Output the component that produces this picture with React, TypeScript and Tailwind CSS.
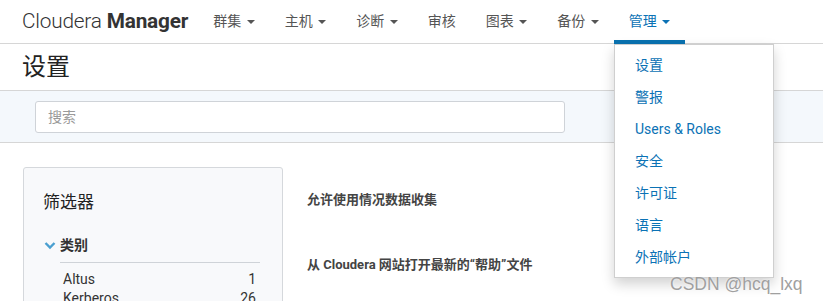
import { useState } from "react";

const font = "font-['Roboto','Noto_Sans_CJK_SC',sans-serif]";

const navItems: { label: string; caret: boolean }[] = [
  { label: "群集", caret: true },
  { label: "主机", caret: true },
  { label: "诊断", caret: true },
  { label: "审核", caret: false },
  { label: "图表", caret: true },
  { label: "备份", caret: true },
];

const menuItems = ["设置", "警报", "Users & Roles", "安全", "许可证", "语言", "外部帐户"];

function Caret({ className = "" }: { className?: string }) {
  return <span className={`ml-[5.5px] inline-block h-0 w-0 border-x-[4px] border-t-[4px] border-x-transparent ${className}`} />;
}

export default function App() {
  const [query, setQuery] = useState("");

  return (
    <div className={`relative h-[301px] w-[823px] overflow-hidden bg-white ${font}`}>
      {/* top nav */}
      <div className="flex h-[44px] items-center border-b border-[#d6d6d6] pl-[22px]">
        <div className="mr-[10px] whitespace-nowrap text-[20.8px] leading-none tracking-[-0.2px] text-[#333]">
          <span className="font-light">Cloudera</span> <span className="font-bold">Manager</span>
        </div>
        <div className="flex h-full items-center">
          {navItems.map((item) => (
            <div key={item.label} className="flex items-center px-[15px] text-[14px] text-[#555]">
              {item.label}
              {item.caret && <Caret className="border-t-[#555]" />}
            </div>
          ))}
          <div className="relative flex h-full items-center px-[15px] text-[14px] text-[#0b72b5]">
            管理
            <Caret className="border-t-[#0b72b5]" />
            <div className="absolute bottom-[-1px] left-0 right-0 h-[4px] bg-[#0a72b0]" />
          </div>
        </div>
      </div>

      {/* title */}
      <div className="flex h-[47px] items-center border-b border-[#d6d6d6] pl-[22px] text-[24px] text-[#222]">设置</div>

      {/* search band */}
      <div className="flex h-[52px] items-center border-b border-[#d6d6d6] bg-[#f4f8fc] pl-[35px]">
        <input
          value={query}
          onChange={(e) => setQuery(e.target.value)}
          placeholder="搜索"
          className="h-[32px] w-[530px] rounded-[3px] border border-[#cfd3d8] bg-white px-[12px] text-[14px] text-[#333] outline-none placeholder:text-[#9a9a9a]"
        />
      </div>

      {/* body */}
      <div className="flex pl-[23px] pt-[24px]">
        <div className="h-[160px] w-[260px] rounded-[3px] border border-[#d5d8dc] bg-[#f8f9fb] px-[19px] pt-[22px]">
          <div className="text-[17px] text-[#222]">筛选器</div>
          <div className="mt-[19px] flex items-center pl-[1px] text-[14px] font-bold text-[#333]">
            <svg width="12" height="9" viewBox="0 0 12 9" className="mr-[4px]">
              <path d="M1.5 2 L6 6.5 L10.5 2" fill="none" stroke="#4a9fd0" strokeWidth="2.4" />
            </svg>
            类别
          </div>
          <div className="ml-[17px] mr-[3px] mt-[6px] border-t border-[#cfd3d8]" />
          <div className="ml-[20px] mr-[7px] mt-[7px] text-[14px] leading-[19px] text-[#333]">
            <div className="flex justify-between">
              <span>Altus</span>
              <span>1</span>
            </div>
            <div className="flex justify-between">
              <span>Kerberos</span>
              <span>26</span>
            </div>
          </div>
        </div>
        <div className="ml-[24px] pt-[23px] text-[13px] font-bold text-[#444]">
          <div>允许使用情况数据收集</div>
          <div className="mt-[45px]">从 Cloudera 网站打开最新的“帮助”文件</div>
        </div>
      </div>

      {/* dropdown menu */}
      <div className="absolute left-[614px] top-[44px] w-[160px] border border-[#cfcfcf] bg-white py-[4px] shadow-[0_6px_12px_rgba(0,0,0,0.18)]">
        {menuItems.map((m) => (
          <div key={m} className="flex h-[32px] items-center pl-[20px] text-[14px] text-[#0b72b5]">
            {m}
          </div>
        ))}
      </div>

      {/* watermark */}
      <div className="absolute left-[670px] top-[271px] font-['Liberation_Sans',sans-serif] text-[17.5px] text-[#a0a0a0] [text-shadow:0_0_2px_#fff]">
        CSDN @hcq_lxq
      </div>
    </div>
  );
}
